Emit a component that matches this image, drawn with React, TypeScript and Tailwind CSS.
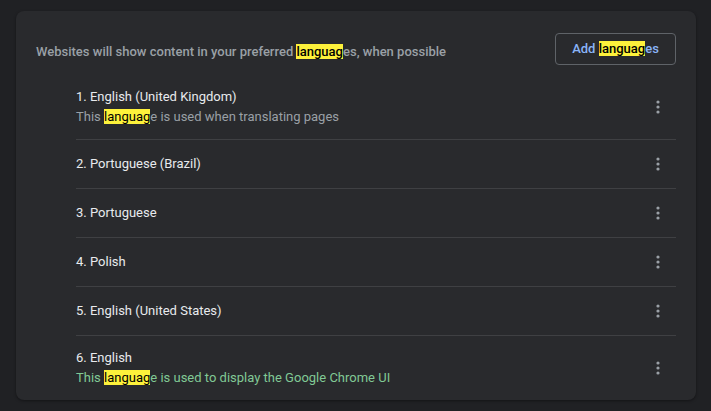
import React from "react";

type Lang = {
  name: string;
  note?: string;
  noteTone?: "muted" | "green";
};

const languages: Lang[] = [
  { name: "1. English (United Kingdom)", note: "is used when translating pages", noteTone: "muted" },
  { name: "2. Portuguese (Brazil)" },
  { name: "3. Portuguese" },
  { name: "4. Polish" },
  { name: "5. English (United States)" },
  { name: "6. English", note: "is used to display the Google Chrome UI", noteTone: "green" },
];

function Hit({ children }: { children: React.ReactNode }) {
  return <span className="bg-[#fdf13b] text-black">{children}</span>;
}

function MoreIcon() {
  return (
    <svg width="4" height="14" viewBox="0 0 4 14" className="text-[#9aa0a6]">
      <circle cx="2" cy="2" r="1.6" fill="currentColor" />
      <circle cx="2" cy="7" r="1.6" fill="currentColor" />
      <circle cx="2" cy="12" r="1.6" fill="currentColor" />
    </svg>
  );
}

function LanguageRow({ lang, first }: { lang: Lang; first: boolean }) {
  const twoLine = !!lang.note;
  return (
    <div
      className={`flex items-center ${twoLine ? "h-[64px]" : "h-[48px]"} ${
        first ? "" : "border-t border-[#3f4043]"
      } box-content`}
    >
      <div className="flex-1 flex flex-col">
        <div className="text-[13px] leading-5 text-[#e8eaed]">{lang.name}</div>
        {lang.note && (
          <div
            className={`text-[13px] leading-5 ${
              lang.noteTone === "green" ? "text-[#81c995]" : "text-[#9aa0a6]"
            }`}
          >
            This <Hit>languag</Hit>e {lang.note}
          </div>
        )}
      </div>
      <button className="w-9 h-9 flex items-center justify-center">
        <MoreIcon />
      </button>
    </div>
  );
}

export default function App() {
  return (
    <div className="w-[711px] h-[411px] bg-[#202124] pt-[11px] pl-4 font-['Roboto',sans-serif] overflow-hidden">
      <div className="w-[680px] h-[389px] rounded-lg bg-[#292a2d] shadow-[0_1px_3px_rgba(0,0,0,0.4)] px-5">
        {/* Header */}
        <div className="flex items-center justify-between pt-[22px]">
          <p className="mt-[6px] text-[13px] font-medium text-[#9aa0a6]">
            Websites will show content in your preferred <Hit>languag</Hit>es, when possible
          </p>
          <button className="w-[121px] h-8 rounded border border-[#5f6368] text-[13px] font-medium text-[#8ab4f8]">
            Add <Hit>languag</Hit>es
          </button>
        </div>

        {/* Language list */}
        <div className="ml-10 mt-[10px]">
          {languages.map((lang, i) => (
            <LanguageRow key={lang.name} lang={lang} first={i === 0} />
          ))}
        </div>
      </div>
    </div>
  );
}
